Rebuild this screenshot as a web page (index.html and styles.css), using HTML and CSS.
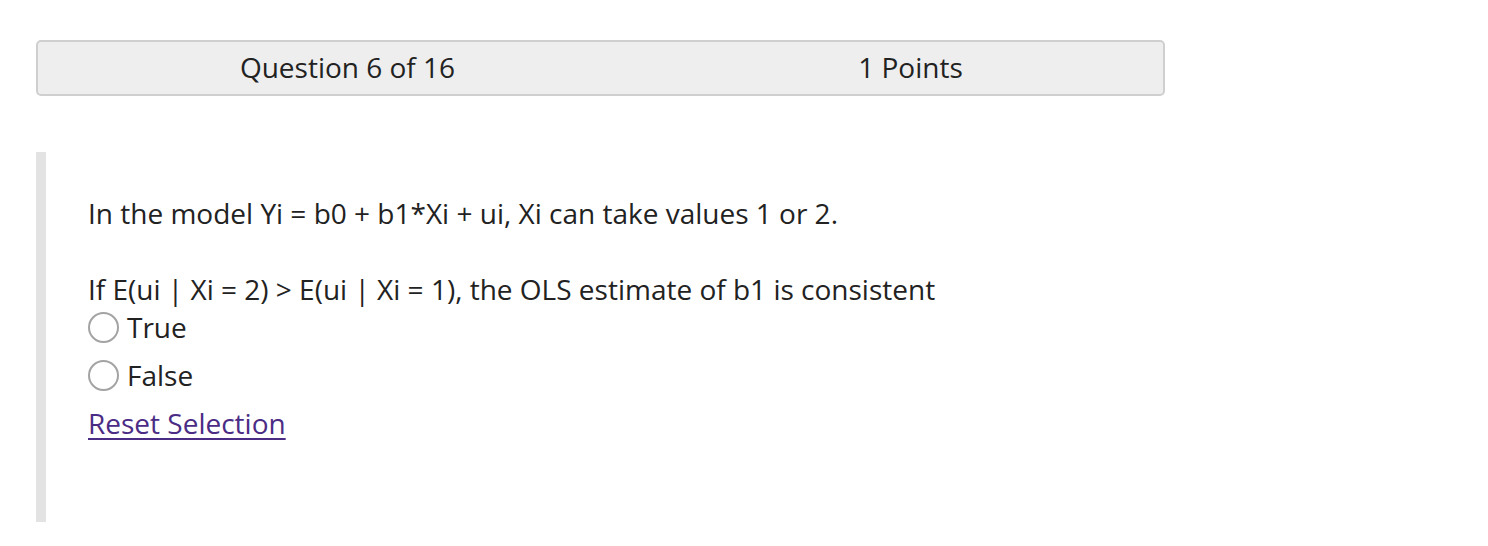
FILE: index.html
```html
<!DOCTYPE html>
<html lang="en">
<head>
<meta charset="utf-8">
<title>Question 6 of 16</title>
<link rel="stylesheet" href="styles.css">
</head>
<body>
<div class="page">
  <div class="qheader">
    <div class="qheader-cell">Question 6 of 16</div>
    <div class="qheader-cell">1 Points</div>
  </div>
  <div class="qbody">
    <p class="stem">In the model Yi = b0 + b1*Xi + ui, Xi can take values 1 or 2.</p>
    <p class="prompt">If E(ui | Xi = 2) &gt; E(ui | Xi = 1), the OLS estimate of b1 is consistent</p>
    <div class="options">
      <label class="option"><span class="radio"></span><span class="option-text">True</span></label>
      <label class="option"><span class="radio"></span><span class="option-text">False</span></label>
      <div class="option"><a class="reset" href="#">Reset Selection</a></div>
    </div>
  </div>
</div>
</body>
</html>
```
FILE: styles.css
```css
html, body {
  margin: 0;
  padding: 0;
  background: #ffffff;
}
body {
  font-family: "Open Sans", "Liberation Sans", sans-serif;
  color: #222222;
}
.page {
  padding: 40px 0 0 36px;
}
.qheader {
  box-sizing: border-box;
  width: 1129px;
  height: 56px;
  border: 2px solid #cfcfcf;
  border-radius: 5px;
  background: #eeeeee;
  display: grid;
  grid-template-columns: 563px 563px;
  padding: 0 0 2px 28px;
  align-items: center;
  font-size: 28px;
  color: #222222;
}
.qheader-cell {
  text-align: center;
  white-space: nowrap;
}
.qbody {
  box-sizing: border-box;
  margin-top: 56px;
  height: 370px;
  border-left: 10px solid #e3e3e3;
  padding: 43px 0 0 42px;
  font-size: 28px;
}
.stem, .prompt {
  margin: 0;
  line-height: 36px;
}
.prompt {
  margin-top: 40px;
}
.options {
  display: flex;
  flex-direction: column;
  gap: 8px;
}
.option {
  height: 40px;
  display: flex;
  align-items: center;
}
.radio {
  box-sizing: border-box;
  width: 31px;
  height: 31px;
  border: 2px solid #a3a3a3;
  border-radius: 50%;
  background: #ffffff;
  margin-right: 8px;
}
.reset {
  color: #4b2c85;
  text-decoration: underline;
  text-underline-offset: 4px;
  text-decoration-thickness: 2px;
}
```
